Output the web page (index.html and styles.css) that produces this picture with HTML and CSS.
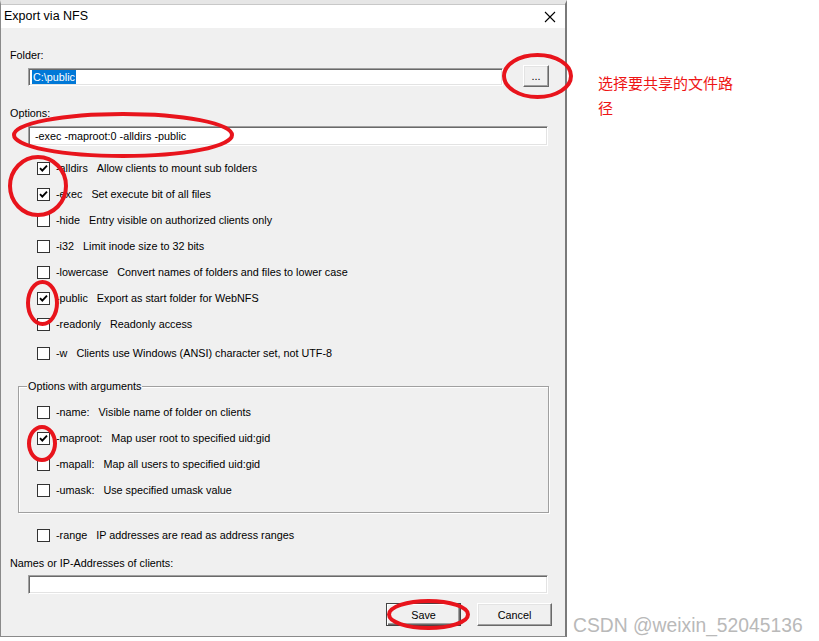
FILE: index.html
```html
<!DOCTYPE html>
<html>
    <head>
        <meta charset="utf-8" />
        <title>Export via NFS</title>
        <link rel="stylesheet" href="styles.css">
    </head>

    <body>
      <div id="page">

        <div id="dialog">
            <div id="titlebar">
                <span>Export via NFS</span>
                <svg class="close" width="12" height="12" viewBox="0 0 12 12">
                    <path d="M1 1 L11 11 M11 1 L1 11" stroke="#000" stroke-width="1.1" fill="none"/>
                </svg>
            </div>

            <div id="contenu">
                <div class="label">Folder:</div>
                <div id="folderRow">
                    <div class="textbox" id="folderBox"><span class="selection">C:\public</span></div>
                    <button class="btn" id="browse">...</button>
                </div>

                <div class="label" id="lblOptions">Options:</div>
                <div class="textbox" id="optionsBox">-exec -maproot:0 -alldirs -public</div>

                <div id="options">
                    <div class="check"><span class="box on"></span><span class="flag">-alldirs</span>Allow clients to mount sub folders</div>
                    <div class="check"><span class="box on"></span><span class="flag">-exec</span>Set execute bit of all files</div>
                    <div class="check"><span class="box"></span><span class="flag">-hide</span>Entry visible on authorized clients only</div>
                    <div class="check"><span class="box"></span><span class="flag">-i32</span>Limit inode size to 32 bits</div>
                    <div class="check"><span class="box"></span><span class="flag">-lowercase</span>Convert names of folders and files to lower case</div>
                    <div class="check"><span class="box on"></span><span class="flag">-public</span>Export as start folder for WebNFS</div>
                    <div class="check"><span class="box"></span><span class="flag">-readonly</span>Readonly access</div>
                    <div class="check" id="rowW"><span class="box"></span><span class="flag">-w</span>Clients use Windows (ANSI) character set, not UTF-8</div>
                </div>

                <div id="groupe">
                    <span class="groupeTitre">Options with arguments</span>
                    <div class="check"><span class="box"></span><span class="flag">-name:</span>Visible name of folder on clients</div>
                    <div class="check"><span class="box on"></span><span class="flag">-maproot:</span>Map user root to specified uid:gid</div>
                    <div class="check"><span class="box"></span><span class="flag">-mapall:</span>Map all users to specified uid:gid</div>
                    <div class="check"><span class="box"></span><span class="flag">-umask:</span>Use specified umask value</div>
                </div>

                <div class="check" id="rowRange"><span class="box"></span><span class="flag">-range</span>IP addresses are read as address ranges</div>

                <div class="label" id="lblClients">Names or IP-Addresses of clients:</div>
                <div class="textbox" id="clientsBox"></div>

                <div id="boutons">
                    <button class="btn defaut">Save</button>
                    <button class="btn">Cancel</button>
                </div>
            </div>
        </div>

        <div id="aside">
            <p class="note">选择要共享的文件路径</p>
            <p class="csdn">CSDN @weixin_52045136</p>
        </div>
      </div>

      <!-- annotations rouges par-dessus la capture -->
      <svg id="marques" width="819" height="641" viewBox="0 0 819 641">
          <ellipse cx="537.5" cy="76" rx="33.5" ry="21"/>
          <ellipse cx="123" cy="135" rx="109" ry="21"/>
          <ellipse cx="38" cy="186" rx="28" ry="29"/>
          <ellipse cx="42.5" cy="303" rx="14.5" ry="21"/>
          <ellipse cx="42" cy="443.5" rx="13" ry="16.5"/>
          <ellipse cx="428.5" cy="614.5" rx="39.5" ry="13.5"/>
      </svg>
    </body>
</html>
```

FILE: styles.css
```css
*{
    box-sizing: border-box;
}
body{
    margin: 0;
    background-color: white;
    font-family: "Liberation Sans", Arial, sans-serif;
    font-size: 10.8px;
    color: black;
}
#page{
    display: flex;
    height: 641px;
    overflow: hidden;
}
#dialog{
    width: 567px;
    height: 637px;
    border: 1px solid #8a8a8a;
    border-right: 2px solid #7a7a7a;
    border-top: 4px solid #e6e6e6;
    display: flex;
    flex-direction: column;
}
#titlebar{
    height: 24px;
    background-color: white;
    border-top: 1px solid #c8c8c8;
    display: flex;
    align-items: center;
    justify-content: space-between;
    padding: 0 9px 1px 3px;
    font-size: 12.5px;
}
.close{
    margin-top: 1px;
}
#contenu{
    flex: 1;
    background-color: #f0f0f0;
    padding: 20px 0 0 9px;
}
.label{
    height: 14px;
    line-height: 14px;
}
#folderRow{
    display: flex;
    align-items: flex-start;
    margin-top: 3px;
    height: 22px;
}
.textbox{
    background-color: white;
    border: 1px solid;
    border-color: #a0a0a0 #fff #fff #a0a0a0;
    box-shadow: inset 1px 1px 0 #696969, inset -1px -1px 0 #e3e3e3;
    margin-left: 18px;
    line-height: 15px;
    padding: 2px 3px;
    white-space: nowrap;
}
#folderBox{
    width: 475px;
    height: 18px;
    margin-top: 3px;
    padding-top: 1px;
}
.selection{
    background-color: #0078d7;
    color: white;
    display: inline-block;
    line-height: 14px;
    padding: 0 1px;
}
.btn{
    font-family: "Liberation Sans", Arial, sans-serif;
    font-size: 10.8px;
    color: black;
    background-color: #f0f0f0;
    border: 1px solid;
    border-color: #fff #696969 #696969 #fff;
    box-shadow: inset -1px -1px 0 #a0a0a0, inset 1px 1px 0 #e3e3e3;
    padding: 0;
}
#browse{
    width: 26px;
    height: 22px;
    margin-left: 20px;
    line-height: 14px;
}
#lblOptions{
    margin-top: 19px;
}
#optionsBox{
    width: 520px;
    height: 20px;
    margin-top: 6px;
    padding-left: 6px;
}
#options{
    margin-top: 9px;
}
.check{
    display: flex;
    align-items: center;
    height: 26px;
    padding-left: 27px;
    white-space: nowrap;
}
#rowW{
    margin-top: 3px;
}
.box{
    width: 13px;
    height: 13px;
    border: 1px solid #333;
    background-color: white;
    flex-shrink: 0;
    margin-right: 6px;
}
.box.on{
    background: white url("data:image/svg+xml;utf8,<svg xmlns='http://www.w3.org/2000/svg' width='11' height='11' viewBox='0 0 11 11'><path d='M2 5.2 L4.3 7.6 L9 2.6' stroke='black' stroke-width='1.9' fill='none'/></svg>") no-repeat center;
}
.flag{
    margin-right: 9px;
}
#groupe{
    position: relative;
    margin: 20px 0 0 8px;
    width: 531px;
    border: 1px solid #a0a0a0;
    box-shadow: 1px 1px 0 #fff, inset 1px 1px 0 #fff;
    padding: 12px 0 9px 0;
}
#groupe .check{
    padding-left: 18px;
}
.groupeTitre{
    position: absolute;
    top: -8px;
    left: 8px;
    padding: 0 1px;
    line-height: 14px;
    background-color: #f0f0f0;
}
#rowRange{
    margin-top: 9px;
}
#lblClients{
    margin-top: 8px;
}
#clientsBox{
    width: 520px;
    height: 19px;
    margin-top: 5px;
}
#boutons{
    display: flex;
    justify-content: flex-end;
    gap: 16px;
    margin: 9px 13px 0 0;
}
#boutons .btn{
    width: 75px;
    height: 23px;
}
.btn.defaut{
    border-color: #444;
    box-shadow: inset 1px 1px 0 #fff, inset -1px -1px 0 #696969, inset -2px -2px 0 #a0a0a0;
}
#aside{
    flex: 1;
    display: flex;
    flex-direction: column;
    padding: 0 0 4px 6px;
}
.note{
    margin: 70px 0 0 25px;
    width: 140px;
    font-family: "Noto Sans CJK SC", sans-serif;
    font-size: 15px;
    line-height: 25px;
    color: #ee1515;
}
.csdn{
    margin: auto 0 0 0;
    font-family: "Liberation Sans", Arial, sans-serif;
    font-size: 19.3px;
    line-height: 22px;
    color: #b9b9b9;
    white-space: nowrap;
}
#marques{
    position: absolute;
    top: 0;
    left: 0;
    pointer-events: none;
}
#marques ellipse{
    fill: none;
    stroke: #e8141c;
    stroke-width: 4;
}
```
